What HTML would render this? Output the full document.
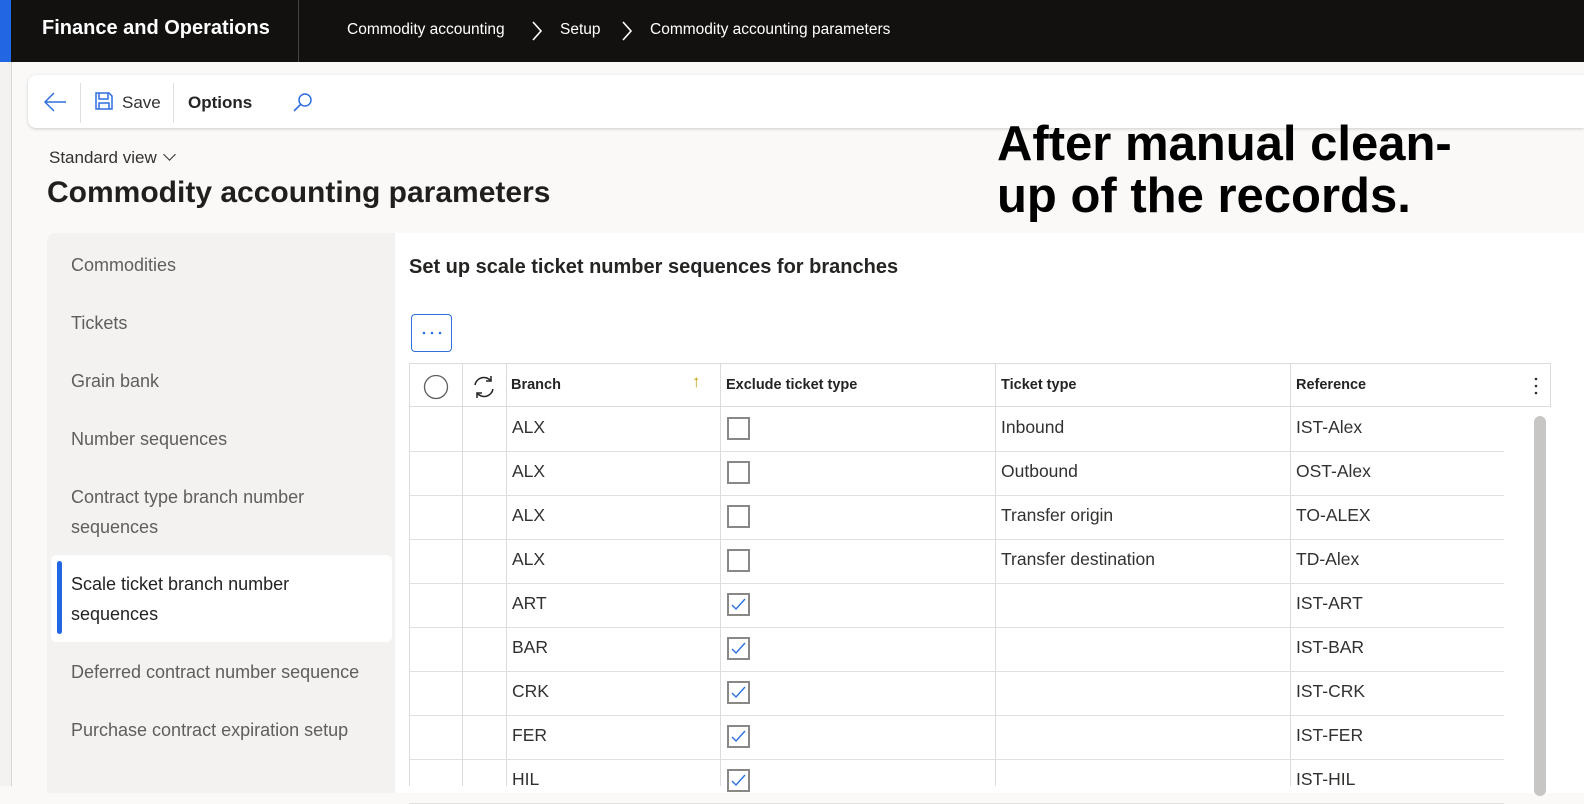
<!DOCTYPE html>
<html><head><meta charset="utf-8"><style>
*{box-sizing:border-box;margin:0;padding:0}
body{width:1584px;height:786px;overflow:hidden;background:#faf9f8;font-family:"Segoe UI","Liberation Sans",sans-serif;position:relative;color:#323130}
.abs{position:absolute}
.top{left:0;top:0;width:1584px;height:62px;background:#121110}
.gut{left:0;top:62px;width:12px;height:724px;background:#f3f2f1;border-right:1px solid #d6d6d6}
.bar{left:28px;top:75px;width:1556px;height:53px;background:#fff;border-radius:8px 0 0 8px;box-shadow:0 1px 3px rgba(0,0,0,.18)}
.nav{left:47px;top:233px;width:348px;height:560px;background:#f3f2f1;border-radius:8px 0 0 0}
.main{left:395px;top:233px;width:1189px;height:560px;background:#fff}
.ni{position:absolute;left:24px;font-size:18px;color:#605e5c;line-height:30px}
.cb{position:absolute;width:23px;height:23px;border:2px solid #8a8886;background:#fff}
.txt{position:absolute;font-size:17.5px;color:#323130}
.hd{position:absolute;font-size:14.5px;font-weight:600;color:#252423;top:377px}
.hl{position:absolute;height:1px;background:#e1dfdd}
.vl{position:absolute;width:1px;background:#dcdcdc;top:363px;height:423px}
</style></head><body>
<div class="abs top"></div>
<div class="abs" style="left:0;top:0;width:11px;height:62px;background:#2266e3"></div>
<div class="abs" style="left:298px;top:0;width:1px;height:62px;background:#444"></div>
<div class="abs" style="left:42px;top:17px;color:#fff;font-size:20px;font-weight:600">Finance and Operations</div>
<div class="abs" style="left:347px;top:21px;color:#fff;font-size:15.5px">Commodity accounting</div>
<svg class="abs" style="left:530px;top:20px" width="14" height="22"><path d="M3 2l8 9-8 9" stroke="#fff" stroke-width="1.6" fill="none"/></svg>
<div class="abs" style="left:560px;top:21px;color:#fff;font-size:15.5px">Setup</div>
<svg class="abs" style="left:620px;top:20px" width="14" height="22"><path d="M3 2l8 9-8 9" stroke="#fff" stroke-width="1.6" fill="none"/></svg>
<div class="abs" style="left:650px;top:21px;color:#fff;font-size:15.5px">Commodity accounting parameters</div>
<div class="abs gut"></div>
<div class="abs bar"></div>
<svg class="abs" style="left:42px;top:90px" width="26" height="24"><path d="M24 12H3M12 3l-9 9 9 9" stroke="#2f6fe0" stroke-width="1.5" fill="none"/></svg>
<div class="abs" style="left:80px;top:83px;width:1px;height:40px;background:#e1dfdd"></div>
<svg class="abs" style="left:94px;top:91px" width="20" height="20"><path d="M2 2h13l3 3v13H2z M5 2v6h9V2 M5 18v-6h10v6" stroke="#2f6fe0" stroke-width="1.5" fill="none"/></svg>
<div class="abs" style="left:122px;top:93px;font-size:17px;color:#323130">Save</div>
<div class="abs" style="left:173px;top:83px;width:1px;height:40px;background:#e1dfdd"></div>
<div class="abs" style="left:188px;top:93px;font-size:17px;font-weight:600;color:#252423">Options</div>
<svg class="abs" style="left:292px;top:92px" width="22" height="22"><circle cx="13" cy="8" r="6" stroke="#2f6fe0" stroke-width="1.5" fill="none"/><path d="M9 12L2 19" stroke="#2f6fe0" stroke-width="1.6"/></svg>
<div class="abs" style="left:49px;top:148px;font-size:17px;color:#323130">Standard view <span style="display:inline-block;width:9px;height:9px;border-right:1.4px solid #323130;border-bottom:1.4px solid #323130;transform:rotate(45deg);margin:0 0 4px 4px"></span></div>
<div class="abs" style="left:47px;top:176px;font-size:30px;font-weight:600;color:#201f1e">Commodity accounting parameters</div>
<div class="abs" style="left:997px;top:118px;font-family:'Liberation Sans',Arial,sans-serif;font-weight:bold;font-size:49px;line-height:52px;color:#000">After manual clean-<br>up of the records.</div>
<div class="abs nav">
<div class="ni" style="top:17px">Commodities</div>
<div class="ni" style="top:75px">Tickets</div>
<div class="ni" style="top:133px">Grain bank</div>
<div class="ni" style="top:191px">Number sequences</div>
<div class="ni" style="top:249px">Contract type branch number<br>sequences</div>
<div style="position:absolute;left:4px;top:322px;width:341px;height:87px;background:#fff;border-radius:6px"></div>
<div style="position:absolute;left:10px;top:328px;width:5px;height:73px;background:#2266e3;border-radius:3px"></div>
<div class="ni" style="top:336px;color:#252423">Scale ticket branch number<br>sequences</div>
<div class="ni" style="top:424px">Deferred contract number sequence</div>
<div class="ni" style="top:482px">Purchase contract expiration setup</div>
</div>
<div class="abs main"></div>
<div class="abs" style="left:409px;top:256px;font-size:20px;font-weight:600;color:#252423">Set up scale ticket number sequences for branches</div>
<div class="abs" style="left:411px;top:314px;width:41px;height:38px;border:1.5px solid #2f6fe0;border-radius:4px"></div>
<svg class="abs" style="left:421px;top:331px" width="22" height="4"><circle cx="3" cy="2" r="1.3" fill="#2f6fe0"/><circle cx="11" cy="2" r="1.3" fill="#2f6fe0"/><circle cx="19" cy="2" r="1.3" fill="#2f6fe0"/></svg>
<div class="abs" style="left:409px;top:363px;width:1141px;height:1px;background:#dcdcdc"></div>
<div class="abs" style="left:409px;top:406px;width:1141px;height:1px;background:#dcdcdc"></div>
<div class="vl" style="left:409px"></div>
<div class="vl" style="left:462px"></div>
<div class="vl" style="left:506px"></div>
<div class="vl" style="left:720px"></div>
<div class="vl" style="left:995px"></div>
<div class="vl" style="left:1290px"></div>
<div class="vl" style="left:1550px;height:44px"></div>
<svg class="abs" style="left:423px;top:374px" width="26" height="26"><circle cx="13" cy="13" r="11.5" stroke="#605e5c" stroke-width="1.3" fill="none"/></svg>
<svg class="abs" style="left:471px;top:374px" width="26" height="26"><path d="M4 11a9 9 0 0 1 16-4M22 15a9 9 0 0 1-16 4" stroke="#252423" stroke-width="1.5" fill="none"/><path d="M20 2v5h-5M6 24v-5h5" stroke="#252423" stroke-width="1.5" fill="none"/></svg>
<div class="hd" style="left:511px">Branch</div>
<div class="abs" style="left:692px;top:372px;color:#c19c00;font-size:17px">↑</div>
<div class="hd" style="left:726px">Exclude ticket type</div>
<div class="hd" style="left:1001px">Ticket type</div>
<div class="hd" style="left:1296px">Reference</div>
<svg class="abs" style="left:1533px;top:376px" width="6" height="20"><circle cx="3" cy="3" r="1.3" fill="#323130"/><circle cx="3" cy="10" r="1.3" fill="#323130"/><circle cx="3" cy="17" r="1.3" fill="#323130"/></svg>
<div class="abs" style="left:1534px;top:416px;width:12px;height:380px;background:#c8c6c4;border-radius:6px"></div>
<div id="rows"></div>
<script>
var d=[["ALX",0,"Inbound","IST-Alex"],["ALX",0,"Outbound","OST-Alex"],["ALX",0,"Transfer origin","TO-ALEX"],["ALX",0,"Transfer destination","TD-Alex"],["ART",1,"","IST-ART"],["BAR",1,"","IST-BAR"],["CRK",1,"","IST-CRK"],["FER",1,"","IST-FER"],["HIL",1,"","IST-HIL"]];
var h="";d.forEach(function(r,i){var y=407+i*44;
h+='<div class="hl" style="left:409px;top:'+(y+44)+'px;width:1095px"></div>';
h+='<div class="txt" style="left:512px;top:'+(y+10)+'px">'+r[0]+'</div>';
h+='<div class="cb" style="left:727px;top:'+(y+10)+'px">'+(r[1]?'<svg width="19" height="19" style="position:absolute;left:0;top:0"><path d="M3 10l4 4 9-10" stroke="#2f6fe0" stroke-width="1.4" fill="none"/></svg>':'')+'</div>';
h+='<div class="txt" style="left:1001px;top:'+(y+10)+'px">'+r[2]+'</div>';
h+='<div class="txt" style="left:1296px;top:'+(y+10)+'px">'+r[3]+'</div>';});
document.getElementById("rows").innerHTML=h;
</script>
</body></html>
